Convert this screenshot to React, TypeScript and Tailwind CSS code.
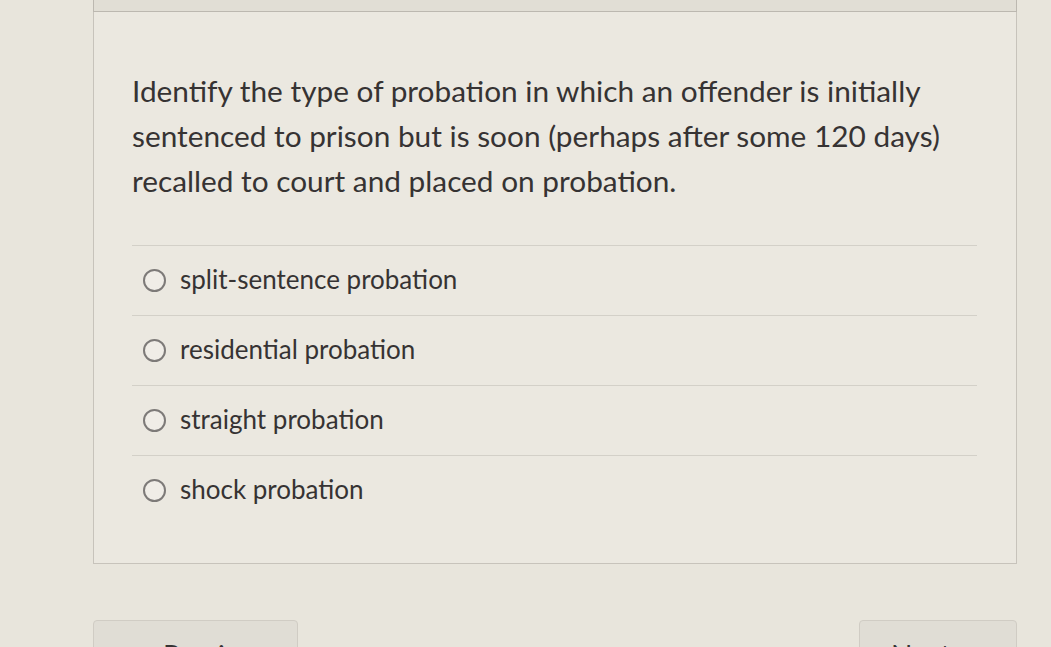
import React from "react";

const options = [
  "split-sentence probation",
  "residential probation",
  "straight probation",
  "shock probation",
];

export default function App() {
  return (
    <div
      className="w-[1051px] h-[647px] overflow-hidden bg-[#e8e5dc] text-[#363333]"
      style={{ fontFamily: "Lato, 'Open Sans', sans-serif" }}
    >
      <div className="ml-[93px] w-[924px] h-[12px] bg-[#e1ded5] border-x border-b border-[#bcb8b0]" />
      <div className="ml-[93px] w-[924px] h-[552px] bg-[#ebe8e0] border-x border-b border-[#c7c3bb] pl-[38px] pr-[39px] pt-[56px]">
        <p className="text-[29.8px] leading-[45px] w-[846px]">
          Identify the type of probation in which an offender is initially
          sentenced to prison but is soon (perhaps after some 120 days)
          recalled to court and placed on probation.
        </p>
        <div className="mt-[42px]">
          {options.map((o) => (
            <div
              key={o}
              className="h-[70px] border-t border-[#d3d0c8] flex items-center pl-[11px] gap-[14px]"
            >
              <span className="w-[23px] h-[23px] rounded-full border-2 border-[#7d7a78] bg-[#f0ede7] shrink-0" />
              <span className="text-[26px] leading-none -mt-[4px]">{o}</span>
            </div>
          ))}
        </div>
      </div>
      <div className="flex justify-between mt-[56px] ml-[93px] w-[924px]">
        <button className="w-[205px] h-[44px] rounded-[4px] border border-[#d0ccc4] bg-[#e0ddd5] text-[28px] leading-none text-[#363333] text-left pl-[69px] pt-[20px]">
          Previous
        </button>
        <button className="w-[158px] h-[44px] rounded-[4px] border border-[#d0ccc4] bg-[#e0ddd5] text-[28px] leading-none text-[#363333] text-left pl-[31px] pt-[20px]">
          Next
        </button>
      </div>
    </div>
  );
}
